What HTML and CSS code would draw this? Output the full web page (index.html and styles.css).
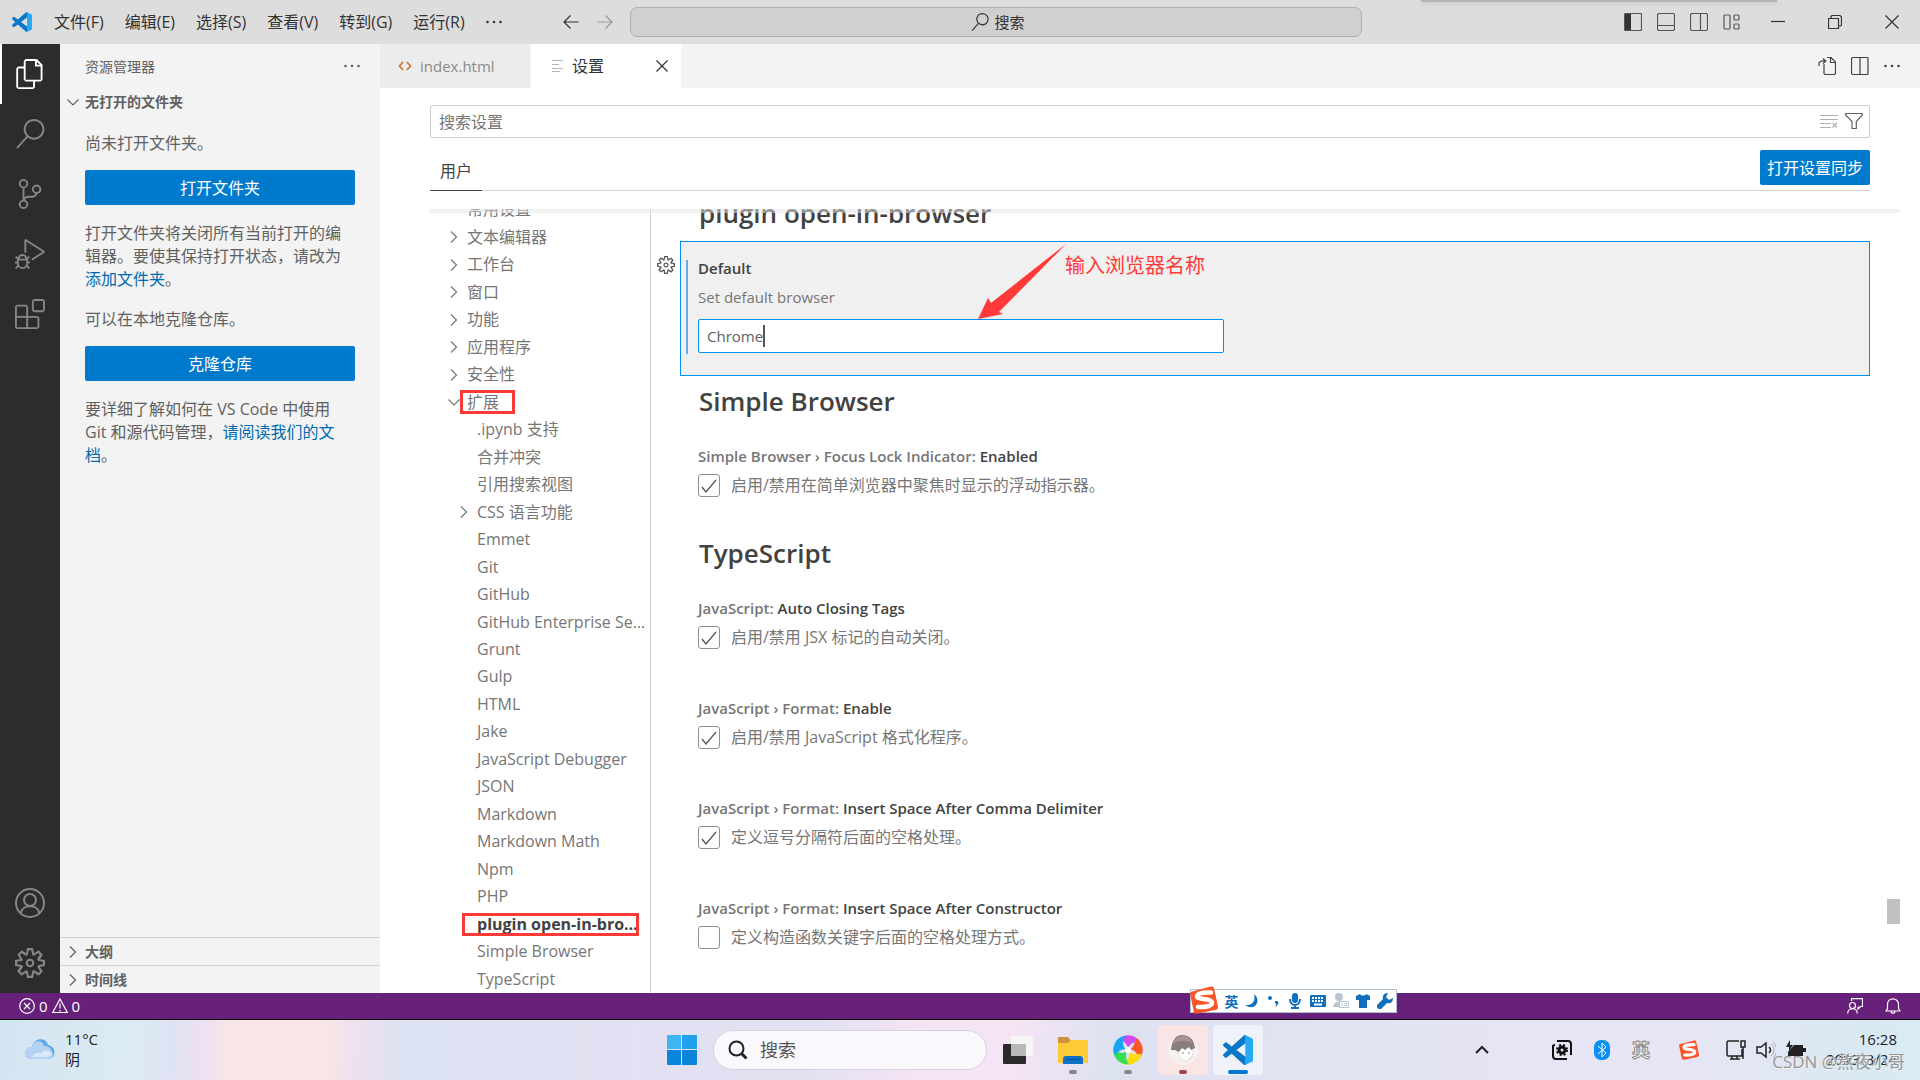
FILE: index.html
```html
<!DOCTYPE html>
<html lang="zh-CN">
<head>
    <meta charset="UTF-8">
    <meta name="viewport" content="width=device-width, initial-scale=1.0">
    <title>设置 - Visual Studio Code</title>
    <link rel="stylesheet" href="styles.css">
</head>
<body>
    <svg class="sprite" aria-hidden="true">
        <symbol id="vscode" viewBox="0 0 24 24">
            <path fill="#0a77c9" d="M18.2.2a1.5 1.5 0 0 0-1.7.3L7 9.1 2.9 6a1 1 0 0 0-1.3.1L.3 7.3a1 1 0 0 0 0 1.4L3.9 12l-3.6 3.3a1 1 0 0 0 0 1.4l1.3 1.2a1 1 0 0 0 1.3.1L7 14.9l9.5 8.6a1.5 1.5 0 0 0 1.7.3zM18 17.4L10.8 12 18 6.6z"/>
            <path fill="#27a9f3" d="M18.2.2l5 2.4a1.5 1.5 0 0 1 .8 1.3v16.2a1.5 1.5 0 0 1-.8 1.3l-5 2.4c-.6.2-1.2.1-1.7-.3.6.5 1.5.1 1.5-.6V1.1c0-.7-.9-1.1-1.5-.6.5-.4 1.1-.5 1.7-.3z"/>
        </symbol>
        <symbol id="gear" viewBox="1 1 14 14">
            <path fill="currentColor" d="M9.1 4.4L8.6 2H7.4l-.5 2.4-.7.3-2-1.3-.9.8 1.3 2-.2.7-2.4.5v1.2l2.4.5.3.8-1.3 2 .8.8 2-1.3.8.3.4 2.3h1.2l.5-2.4.8-.3 2 1.3.8-.8-1.3-2 .3-.8 2.3-.4V7.4l-2.4-.5-.3-.8 1.3-2-.8-.8-2 1.3-.7-.2zM9.4 1l.5 2.4L12 2.1l2 2-1.4 2.1 2.4.4v2.8l-2.4.5L14 12l-2 2-2.1-1.4-.5 2.4H6.6l-.5-2.4L4 13.9l-2-2 1.4-2.1L1 9.4V6.6l2.4-.5L2.1 4l2-2 2.1 1.4.4-2.4h2.8zm.6 7c0 1.1-.9 2-2 2s-2-.9-2-2 .9-2 2-2 2 .9 2 2zM8 9c.6 0 1-.4 1-1s-.4-1-1-1-1 .4-1 1 .4 1 1 1z"/>
        </symbol>
        <symbol id="right" viewBox="0 0 12 12"><path class="line" d="M3 .5L8.5 6 3 11.5"/></symbol>
        <symbol id="down" viewBox="0 0 12 12"><path class="line" d="M.5 3.5L6 9l5.500-5.500"/></symbol>
        <symbol id="dots" viewBox="0 0 16 16"><g fill="currentColor"><circle cx="1.5" cy="8" r="1.3"/><circle cx="8" cy="8" r="1.3"/><circle cx="14.5" cy="8" r="1.3"/></g></symbol>
        <symbol id="magnifier" viewBox="0 0 24 24"><path fill="currentColor" d="M15.25 0a8.25 8.25 0 0 0-6.18 13.72L1 22.88l1.12 1 8.05-9.12A8.251 8.251 0 1 0 15.25.01V0zm0 15a6.75 6.75 0 1 1 0-13.5 6.75 6.75 0 0 1 0 13.5z"/></symbol>
        <symbol id="sogou" viewBox="0 0 28 28">
            <path fill="#fb5426" d="M2 5.5L21 .6q2.5-.6 3.1 1.8L28 20.5q.4 2.6-2 3.2L7 27.7q-2.6.5-3.2-2L.2 8.5Q-.2 6 2 5.5z"/>
            <path fill="none" stroke="#fff" stroke-width="4.5" stroke-linecap="round" d="M21 6.5C13 6 7 7.5 7 10.5c0 3.5 14.5 1.5 15 6 .3 3.5-6 5-14 4.5"/>
        </symbol>
    </svg>

    <header class="titlebar">
        <div class="title-left">
            <svg class="logo"><use href="#vscode"/></svg>
            <nav class="menu">
                <button>文件(F)</button>
                <button>编辑(E)</button>
                <button>选择(S)</button>
                <button>查看(V)</button>
                <button>转到(G)</button>
                <button>运行(R)</button>
                <button aria-label="更多"><svg class="i16"><use href="#dots"/></svg></button>
            </nav>
            <div class="history">
                <button aria-label="后退"><svg class="i16" viewBox="0 0 16 16"><path class="line" d="M15.5 8H1M7.5 1.5L1 8l6.5 6.5"/></svg></button>
                <button class="disabled" aria-label="前进"><svg class="i16" viewBox="0 0 16 16"><path class="line" d="M.5 8H15M8.5 1.5L15 8l-6.5 6.5"/></svg></button>
            </div>
        </div>
        <button class="command-center"><svg class="i18"><use href="#magnifier"/></svg>搜索</button>
        <div class="title-right">
            <div class="layout-controls">
                <button aria-label="切换主侧栏"><svg class="i18" viewBox="0 0 18 18"><rect class="line" x=".5" y=".5" width="17" height="17" rx="1"/><path fill="#333" d="M1 1h6v16H1z"/></svg></button>
                <button aria-label="切换面板"><svg class="i18" viewBox="0 0 18 18"><path class="line" d="M1.5.5h15l1 1v15l-1 1h-15l-1-1v-15zM.5 12.5h17"/></svg></button>
                <button aria-label="切换辅助侧栏"><svg class="i18" viewBox="0 0 18 18"><path class="line" d="M1.5.5h15l1 1v15l-1 1h-15l-1-1v-15zM10.5.5v17"/></svg></button>
                <button aria-label="自定义布局"><svg class="i18" viewBox="0 0 18 18"><g class="line"><rect x="1" y="2" width="6" height="14" rx="1"/><rect x="11" y="2" width="5" height="5" rx="1"/><rect x="11" y="11" width="5" height="5" rx="1"/></g></svg></button>
            </div>
            <div class="window-controls">
                <button aria-label="最小化"><svg class="i14" viewBox="0 0 14 14"><path class="line" d="M0 6.5h14"/></svg></button>
                <button aria-label="还原"><svg class="i14" viewBox="0 0 14 14"><path class="line" d="M.5 3.5h10v10H.5zM3 3.5v-2l1-1h8l1.5 1.5v8l-1 1h-2"/></svg></button>
                <button aria-label="关闭"><svg class="i14" viewBox="0 0 14 14"><path class="line" d="M.5.5l13 13M13.5.5l-13 13"/></svg></button>
            </div>
        </div>
        <div class="top-sliver"></div>
    </header>

    <div class="workbench">
        <nav class="activitybar">
            <button class="active" aria-label="资源管理器"><svg class="i30" viewBox="0 0 24 24"><path fill="currentColor" d="M17.5 0h-9L7 1.5V6H2.5L1 7.5v15.07L2.5 24h12.07L16 22.57V18h4.7l1.3-1.43V4.5L17.5 0zm0 2.12l2.38 2.38H17.5V2.12zm-3 20.38h-12v-15H7v9.07L8.5 18h6v4.5zm6-6h-12v-15H16V6h4.5v10.5z"/></svg></button>
            <button aria-label="搜索"><svg class="i30"><use href="#magnifier"/></svg></button>
            <button aria-label="源代码管理"><svg class="i30" viewBox="0 0 24 24"><path fill="currentColor" d="M21.007 8.222A3.738 3.738 0 0 0 15.045 5.2a3.737 3.737 0 0 0 1.156 6.583 2.988 2.988 0 0 1-2.668 1.67h-2.99a4.456 4.456 0 0 0-2.989 1.165V7.4a3.737 3.737 0 1 0-1.494 0v9.117a3.776 3.776 0 1 0 1.816.099 2.99 2.99 0 0 1 2.668-1.667h2.99a4.484 4.484 0 0 0 4.223-3.039 3.736 3.736 0 0 0 3.25-3.687zM4.565 3.738a2.242 2.242 0 1 1 4.484 0 2.242 2.242 0 0 1-4.484 0zm4.484 16.441a2.242 2.242 0 1 1-4.484 0 2.242 2.242 0 0 1 4.484 0zm8.221-9.715a2.242 2.242 0 1 1 0-4.485 2.242 2.242 0 0 1 0 4.485z"/></svg></button>
            <button aria-label="运行和调试"><svg class="i30" viewBox="0 0 24 24"><path fill="currentColor" d="M10.94 13.5l-1.32 1.32a3.73 3.73 0 0 0-7.24 0L1.06 13.5 0 14.56l1.72 1.72-.22.22V18H0v1.5h1.5v.08c.077.489.214.966.41 1.42L0 22.94 1.06 24l1.65-1.65A4.308 4.308 0 0 0 6 24a4.31 4.31 0 0 0 3.29-1.65L10.94 24 12 22.94 10.09 21c.198-.464.336-.951.41-1.45v-.1H12V18h-1.5v-1.5l-.22-.22L12 14.56l-1.06-1.06zM6 13.5a2.25 2.25 0 0 1 2.25 2.25h-4.5A2.25 2.25 0 0 1 6 13.5zm3 6a3.33 3.33 0 0 1-3 3 3.33 3.33 0 0 1-3-3v-2.25h6v2.25zm14.76-9.9v1.26L13.5 17.37V15.6l8.5-5.37L9 2v9.46a5.07 5.07 0 0 0-1.5-.72V.63L8.64 0l15.12 9.6z"/></svg></button>
            <button aria-label="扩展"><svg class="i30" viewBox="0 0 24 24"><path fill="currentColor" d="M13.5 1.5L15 0h7.5L24 1.5V9l-1.5 1.5H15L13.5 9V1.5zm1.5 0V9h7.5V1.5H15zM0 15V6l1.5-1.5H9L10.5 6v7.5H18l1.5 1.5v7.5L18 24H1.5L0 22.5V15zm9-1.5V6H1.5v7.5H9zM9 15H1.5v7.5H9V15zm1.5 7.5H18V15h-7.5v7.5z"/></svg></button>
            <span class="spacer"></span>
            <button aria-label="帐户"><svg class="i30" viewBox="0 0 30 30"><g fill="none" stroke="currentColor" stroke-width="2"><circle cx="15" cy="15" r="14"/><circle cx="15" cy="12" r="6"/><path d="M6 25c1-9 17-9 18 0"/></g></svg></button>
            <button aria-label="管理"><svg class="i30"><use href="#gear"/></svg></button>
        </nav>

        <aside class="sidebar">
            <div class="sidebar-title">资源管理器<button aria-label="更多操作"><svg class="i16"><use href="#dots"/></svg></button></div>
            <div class="pane-header"><svg class="i12"><use href="#down"/></svg>无打开的文件夹</div>
            <div class="welcome">
                <p>尚未打开文件夹。</p>
                <button class="primary">打开文件夹</button>
                <p>打开文件夹将关闭所有当前打开的编辑器。要使其保持打开状态，请改为<a href="#">添加文件夹</a>。</p>
                <p>可以在本地克隆仓库。</p>
                <button class="primary">克隆仓库</button>
                <p>要详细了解如何在 VS Code 中使用 Git 和源代码管理，<a href="#">请阅读我们的文档</a>。</p>
            </div>
            <div class="pane-header collapsed"><svg class="i12"><use href="#right"/></svg>大纲</div>
            <div class="pane-header collapsed"><svg class="i12"><use href="#right"/></svg>时间线</div>
        </aside>

        <main class="editor">
            <div class="tabs">
                <div class="tab"><svg class="i14 html-icon" viewBox="0 0 14 14"><path fill="none" stroke="currentColor" stroke-width="1.6" d="M5 3L1.5 7 5 11M9 3l3.500 4L9 11"/></svg><span class="file">index.html</span></div>
                <div class="tab current"><svg class="i12 list-icon" viewBox="0 0 12 12"><path fill="none" stroke="currentColor" d="M0 .5h11M0 4.5h7M0 8.5h11M0 11.5h8"/></svg>设置<button aria-label="关闭"><svg class="i12" viewBox="0 0 12 12"><path class="line" d="M.5.5l11 11M11.5.5l-11 11"/></svg></button></div>
                <div class="editor-actions">
                    <button aria-label="打开设置(json)"><svg class="i18" viewBox="0 0 18 18"><path class="line" d="M6 7v9.500l1 1h9.500l1-1V5L13 .5H9M12.500.5v5h5M1.500 9C-.5 5 3 3.500 7.500 4M5 1.500L7.800 4 5 6.500"/></svg></button>
                    <button aria-label="拆分编辑器"><svg class="i18" viewBox="0 0 18 18"><path class="line" d="M1.500.5h15l.5 1v15l-.5 1h-15l-1-1v-15zM9 .5v17"/></svg></button>
                    <button aria-label="更多操作"><svg class="i16"><use href="#dots"/></svg></button>
                </div>
            </div>

            <div class="settings-head">
                <div class="settings-search">
                    <input type="text" placeholder="搜索设置" aria-label="搜索设置">
                    <button class="faded" aria-label="清除"><svg class="i18" viewBox="0 0 18 18"><path class="line" d="M0 2.5h18M0 6.5h18M0 10.5h11M0 14.5h11M12.500 10l4.500 4.500M17 10l-4.500 4.500"/></svg></button>
                    <button aria-label="筛选"><svg class="i18" viewBox="0 0 18 18"><path class="line" d="M.7.5h16.600V2l-6 6.500v7H7v-7L.7 2z"/></svg></button>
                </div>
                <div class="settings-tabs">
                    <button class="scope">用户</button>
                    <button class="primary">打开设置同步</button>
                </div>
            </div>

            <div class="settings-body">
                <ul class="toc">
                    <li>常用设置</li>
                    <li><svg class="i12"><use href="#right"/></svg>文本编辑器</li>
                    <li><svg class="i12"><use href="#right"/></svg>工作台</li>
                    <li><svg class="i12"><use href="#right"/></svg>窗口</li>
                    <li><svg class="i12"><use href="#right"/></svg>功能</li>
                    <li><svg class="i12"><use href="#right"/></svg>应用程序</li>
                    <li><svg class="i12"><use href="#right"/></svg>安全性</li>
                    <li><svg class="i12"><use href="#down"/></svg>扩展<span class="mark mark-short"></span></li>
                    <li class="child">.ipynb 支持</li>
                    <li class="child">合并冲突</li>
                    <li class="child">引用搜索视图</li>
                    <li class="child"><svg class="i12"><use href="#right"/></svg>CSS 语言功能</li>
                    <li class="child">Emmet</li>
                    <li class="child">Git</li>
                    <li class="child">GitHub</li>
                    <li class="child"><span class="clip">GitHub Enterprise Server</span></li>
                    <li class="child">Grunt</li>
                    <li class="child">Gulp</li>
                    <li class="child">HTML</li>
                    <li class="child">Jake</li>
                    <li class="child">JavaScript Debugger</li>
                    <li class="child">JSON</li>
                    <li class="child">Markdown</li>
                    <li class="child">Markdown Math</li>
                    <li class="child">Npm</li>
                    <li class="child">PHP</li>
                    <li class="child selected"><span class="clip">plugin open-in-browser</span><span class="mark mark-long"></span></li>
                    <li class="child">Simple Browser</li>
                    <li class="child">TypeScript</li>
                </ul>

                <section class="settings-list">
                    <h2>plugin open-in-browser</h2>
                    <div class="setting focused">
                        <button class="setting-gear" aria-label="更多操作"><svg class="i18"><use href="#gear"/></svg></button>
                        <div class="modified"></div>
                        <label class="name" for="browser"><b>Default</b></label>
                        <p>Set default browser</p>
                        <div class="field"><input type="text" id="browser" value="Chrome"><span class="caret"></span></div>
                        <svg class="arrow" viewBox="0 0 90 76"><path fill="#ff3a38" d="M88 1L21 69l4 2-25 5 10-21 3 5z"/></svg>
                        <span class="note">输入浏览器名称</span>
                    </div>

                    <h2>Simple Browser</h2>
                    <div class="setting">
                        <div class="name">Simple Browser › Focus Lock Indicator: <b>Enabled</b></div>
                        <label class="check"><input type="checkbox" checked>启用/禁用在简单浏览器中聚焦时显示的浮动指示器。</label>
                    </div>

                    <h2>TypeScript</h2>
                    <div class="setting">
                        <div class="name">JavaScript: <b>Auto Closing Tags</b></div>
                        <label class="check"><input type="checkbox" checked>启用/禁用 JSX 标记的自动关闭。</label>
                    </div>
                    <div class="setting">
                        <div class="name">JavaScript › Format: <b>Enable</b></div>
                        <label class="check"><input type="checkbox" checked>启用/禁用 JavaScript 格式化程序。</label>
                    </div>
                    <div class="setting">
                        <div class="name">JavaScript › Format: <b>Insert Space After Comma Delimiter</b></div>
                        <label class="check"><input type="checkbox" checked>定义逗号分隔符后面的空格处理。</label>
                    </div>
                    <div class="setting">
                        <div class="name">JavaScript › Format: <b>Insert Space After Constructor</b></div>
                        <label class="check"><input type="checkbox">定义构造函数关键字后面的空格处理方式。</label>
                    </div>
                </section>
                <div class="scroll-thumb"></div>
            </div>
        </main>
    </div>

    <div class="statusbar">
        <button class="problems">
            <svg class="i16" viewBox="0 0 16 16"><g class="line"><circle cx="8" cy="8" r="7.3"/><path d="M5 5l6 6M11 5l-6 6"/></g></svg>0
            <svg class="i16" viewBox="0 0 16 16"><path class="line" d="M8 1L.7 14.5h14.600zM8 5.5v5M8 12v1.500"/></svg>0
        </button>
        <div class="status-right">
            <button aria-label="反馈"><svg class="i16" viewBox="0 0 16 16"><g class="line"><circle cx="5.5" cy="7.5" r="3"/><path d="M.7 15.5c0-6.500 9.600-6.500 9.600 0M4.500 3V.7h11v7.800h-2L11 11V8.500"/></g></svg></button>
            <button aria-label="通知"><svg class="i16" viewBox="0 0 16 16"><path class="line" d="M1 13h14l-1.500-2.500v-4c0-7.500-11-7.500-11 0v4zM6 13.500c.5 2.300 3.500 2.300 4 0"/></svg></button>
        </div>
        <div class="ime">
            <svg class="ime-logo"><use href="#sogou"/></svg>
            <span>英</span>
            <svg class="i14" viewBox="0 0 14 14"><path fill="currentColor" d="M9 0c8 6 1 18-9 11 7 1 11-4 9-11z"/></svg>
            <svg class="i14" viewBox="0 0 14 14"><circle cx="4" cy="4" r="2" fill="currentColor"/><path fill="currentColor" d="M9 7c6-1 3 5 0 6 1-2 2-3 0-4z"/></svg>
            <svg class="i16" viewBox="0 0 16 16"><rect x="5" y="0" width="6" height="10" rx="3" fill="currentColor"/><path fill="none" stroke="currentColor" stroke-width="2" d="M3 6c0 8 10 8 10 0M8 12v3M4 15h8"/></svg>
            <svg class="i16" viewBox="0 0 16 16"><rect x="0" y="2" width="16" height="12" rx="1" fill="currentColor"/><path stroke="#fff" stroke-width="2" stroke-dasharray="2 1" d="M2 5h12M2 8h12"/><path stroke="#fff" stroke-width="2" d="M4 11.5h8"/></svg>
            <svg class="i16 muted" viewBox="0 0 16 16"><circle cx="6" cy="4" r="4" fill="currentColor"/><path fill="currentColor" d="M0 14c0-7 12-7 12 0z"/><rect x="6.500" y="8.500" width="9" height="6" fill="#fff" stroke="currentColor"/><path stroke="currentColor" d="M9 10v3M11 10.500h2.500M11 12.500h2.500M13.500 10v3"/></svg>
            <svg class="i14" viewBox="0 0 14 14"><path fill="currentColor" d="M0 2l4-2c1 2 5 2 6 0l4 2v4h-3v8H3V6H0z"/></svg>
            <svg class="i16" viewBox="0 0 16 16"><path fill="currentColor" d="M11 0L9 4l3 3 4-2c0 5-4 6-6 5l-6 6c-3 1-5-2-4-4l6-6c-1-3 1-6 5-6z"/></svg>
        </div>
    </div>

    <footer class="taskbar">
        <div class="weather">
            <svg class="cloud" viewBox="0 0 30 20"><path fill="#62a8e8" d="M7 8C9-2 21-2 23 6c8 1 9 13 1 14H6C-2 19-1 9 7 8z"/><path fill="#b5d2f3" d="M6 20C-2 19-1 8 7 8c2-8 11-7 12-1 6-1 8 5 9 8 0 3-2 5-5 5z"/><path fill="#d9e8fa" d="M8 18c0-4 5-5 8-4 3-4 9-3 11 1-2 4-10 3-19 3z"/></svg>
            <div>11°C<br>阴</div>
        </div>
        <div class="apps">
            <button class="app start" aria-label="开始"><svg class="i30" viewBox="0 0 30 30"><g fill="#0b84dc"><path fill="#3fb4f3" d="M0 1q0-1 1-1h13v14H0z"/><path fill="#1ea2ee" d="M15 0h14q1 0 1 1v13H15z"/><path d="M0 15h14v15H1q-1 0-1-1zM15 15h15v14q0 1-1 1H15z"/></g></svg></button>
            <label class="task-search"><svg viewBox="0 0 20 20"><circle cx="8.500" cy="8.500" r="7" fill="none" stroke="#222" stroke-width="2"/><path stroke="#222" stroke-width="3" d="M13.500 13.500l5 5"/></svg><input type="text" placeholder="搜索" aria-label="搜索"></label>
            <button class="app" aria-label="任务视图"><svg class="i30" viewBox="0 0 30 30"><rect y="9" width="23" height="20" rx="1" fill="#2a2a2a"/><rect x="8" y="1" width="22" height="20" rx="1" fill="#f6f6f6"/><path fill="#b8b8b8" d="M8 9h15v12H8z"/></svg></button>
            <button class="app running" aria-label="文件资源管理器"><svg class="i30" viewBox="0 0 30 30"><path fill="#cf923a" d="M0 2h10l3 4h10v8H0z"/><path fill="#ffca38" d="M13 5h16q1 0 1 1v22H0V8h10z"/><path fill="#0f72c8" d="M5 29v-5q0-3 3-3h14q3 0 3 3v5z"/><path stroke="#0a4f94" d="M9 24.500h12"/></svg></button>
            <button class="app running" aria-label="浏览器"><svg class="i30" viewBox="-15 -15 30 30">
                <path id="petal" fill="#d04bf0" d="M-9-11C-3-17 9-16 13-6 8-9 2-7 0-2-1-6-4-9-9-11z"/>
                <path fill="#fb5a27" transform="rotate(72)" d="M-9-11C-3-17 9-16 13-6 8-9 2-7 0-2-1-6-4-9-9-11z"/>
                <path fill="#fbdc12" transform="rotate(144)" d="M-9-11C-3-17 9-16 13-6 8-9 2-7 0-2-1-6-4-9-9-11z"/>
                <path fill="#36df52" transform="rotate(216)" d="M-9-11C-3-17 9-16 13-6 8-9 2-7 0-2-1-6-4-9-9-11z"/>
                <path fill="#18a5f5" transform="rotate(288)" d="M-9-11C-3-17 9-16 13-6 8-9 2-7 0-2-1-6-4-9-9-11z"/>
                <circle r="3" fill="#fff"/>
            </svg></button>
            <button class="app running alert" aria-label="聊天"><svg class="i30" viewBox="0 0 30 30"><circle cx="15" cy="15" r="15" fill="#f3f2f1"/><path fill="#e3d8d4" d="M8 14l4 10 6 3 7-5-1-8z"/><path fill="#fff" d="M10 14l2 9 6 3 6-5v-8z"/><path fill="#8a7d7e" d="M3 15C4 5 8 0 14 0c8 0 12 5 13 13l-4 2-2-3-4 3-3-2-3 4-4-2z"/><path fill="#ad9290" d="M5 9C7-1 22-2 24 8c-6-3-12-3-19 1z"/><path stroke="#8a7d7e" d="M14 18h2M20 18h2"/></svg></button>
            <button class="app running open" aria-label="Visual Studio Code"><svg class="i30"><use href="#vscode"/></svg></button>
        </div>
        <div class="tray">
            <svg class="i14 up" viewBox="0 0 14 14"><path fill="none" stroke="#222" stroke-width="2" d="M1 10l6-6 6 6"/></svg>
            <svg class="i20" viewBox="0 0 20 20"><path fill="none" stroke="#111" stroke-width="2" d="M5 1h11q3 0 3 3v11M1 5v11q0 3 3 3h11M15 19H4q-3 0-3-3V7q0-2 2-2"/><circle cx="10" cy="10" r="3" fill="none" stroke="#111" stroke-width="3"/><circle cx="10" cy="10" r="5" fill="none" stroke="#111" stroke-width="2" stroke-dasharray="2 2"/></svg>
            <svg class="i20" viewBox="0 0 20 20"><rect x="2" width="16" height="20" rx="7" fill="#0a90f0"/><path fill="none" stroke="#fff" d="M6 6l8 7-4 4V3l4 4-8 7"/></svg>
            <span class="lang">英</span>
            <svg class="i20 tray-ime"><use href="#sogou"/></svg>
            <div class="tray-group">
                <svg class="i20" viewBox="0 0 20 20"><path fill="none" stroke="#222" stroke-width="1.5" d="M13 1H2L1 2v13l1 1h14V9M6 16v3M11 16v3M4 19h10M15 1h4v6h-4zM17 7v12"/></svg>
                <svg class="i20" viewBox="0 0 20 20"><path fill="none" stroke="#222" stroke-width="1.5" d="M1 7h4l5-4v14l-5-4H1zM13 7c2 2 2 4 0 6"/><path fill="none" stroke="#aaa" d="M15 4c4 4 4 8 0 12M17 2c5 5 5 11 0 16"/></svg>
                <svg class="i20" viewBox="0 0 20 20"><path fill="#222" d="M8 5h9v3h3v4h-3v4H2v-4zM4 0L0 7h3v4l4-6H4z"/></svg>
            </div>
            <div class="clock">16:28<br>2023/3/24</div>
        </div>
        <div class="watermark">CSDN @熬夜小哥</div>
    </footer>
</body>
</html>
```
FILE: styles.css
```css
* { box-sizing: border-box; }
body { font-family: 'Open Sans', 'Noto Sans CJK SC', sans-serif; font-size: 16px; line-height: 23px; color: #616161; margin: 0; height: 100vh; display: flex; flex-direction: column; overflow: hidden; background: white; }
button, input { font: inherit; color: inherit; padding: 0; margin: 0; border: 0; background: none; outline: none; }
button { cursor: pointer; }
a { color: #006ab1; text-decoration: none; }
svg { display: block; flex: none; }
.sprite { position: absolute; width: 0; height: 0; }
.line { fill: none; stroke: currentColor; stroke-width: 1.2; }
.i12 { width: 12px; height: 12px; }
.i14 { width: 14px; height: 14px; }
.i16 { width: 16px; height: 16px; }
.i18 { width: 18px; height: 18px; }
.i20 { width: 20px; height: 20px; }
.i30 { width: 30px; height: 30px; }
.primary { background: #007acc; color: white; height: 35px; padding-top: 2px; border-radius: 2px; }

/* title bar */
.titlebar { position: relative; display: flex; align-items: center; height: 44px; flex: none; background: #ddd; color: #333; }
.title-left { display: flex; align-items: center; width: 630px; padding: 0 17px 0 12px; }
.logo { width: 20px; height: 20px; margin-right: 12px; }
.menu { display: flex; align-items: center; gap: 1px; }
.menu button { padding: 0 10px; }
.history { display: flex; gap: 18px; margin-left: auto; }
.disabled { color: #999; }
.command-center { display: flex; justify-content: center; align-items: center; gap: 5px; flex: 1; height: 30px; padding-left: 4px; font-size: 15px; background: #d0d0d0; border: 1px solid #b0b0b0; border-radius: 7px; }
.title-right { display: flex; align-items: center; justify-content: flex-end; width: 558px; }
.layout-controls { display: flex; gap: 15px; margin-right: 8px; color: #555; }
.window-controls { display: flex; }
.window-controls button { display: flex; justify-content: center; width: 57px; }
.top-sliver { position: absolute; top: 0; right: 143px; width: 356px; height: 2px; background: #b5b5b5; box-shadow: 0 1px 4px #bbb; }

/* activity bar */
.workbench { display: flex; flex: 1; min-height: 0; }
.activitybar { display: flex; flex-direction: column; width: 60px; background: #2c2c2c; }
.activitybar button { display: flex; justify-content: center; align-items: center; height: 60px; color: #868686; border-right: 2px solid transparent; border-left: 2px solid transparent; }
.activitybar .active { color: white; border-left-color: white; }
.spacer { flex: 1; }

/* sidebar */
.sidebar { display: flex; flex-direction: column; width: 320px; background: #f3f3f3; }
.sidebar-title { display: flex; justify-content: space-between; align-items: center; height: 44px; padding: 0 20px 0 25px; font-size: 14px; }
.pane-header { display: flex; align-items: center; gap: 6px; height: 27px; padding-left: 7px; font-size: 14px; font-weight: bold; }
.collapsed { height: 28px; border-top: 1px solid #d4d4d4; }
.welcome { flex: 1; padding: 0 25px; }
.welcome p { margin: 17px 0 15px; }
.welcome .primary { display: block; width: 100%; }

/* editor */
.editor { display: flex; flex-direction: column; flex: 1; min-width: 0; }
.tabs { display: flex; height: 44px; background: #f3f3f3; }
.tab { display: flex; align-items: center; gap: 8px; width: 151px; padding: 0 13px 0 18px; background: #ececec; color: #8a8a8a; border-right: 1px solid #f3f3f3; }
.tab.current { padding-left: 21px; background: white; color: #333; }
.tab button { margin-left: auto; }
.file { font-size: 15px; }
.html-icon { color: #cc7433; }
.list-icon { color: #b5b5b5; }
.editor-actions { display: flex; align-items: center; gap: 15px; margin-left: auto; padding-right: 20px; color: #424242; }
.settings-head { padding: 17px 50px 18px; }
.settings-search { display: flex; align-items: center; gap: 7px; height: 33px; padding: 0 6px 0 8px; border: 1px solid #cecece; border-radius: 2px; }
.settings-search input { flex: 1; padding-top: 2px; }
.settings-search input::placeholder { color: #767676; }
.faded { color: #b0b0b0; }
.settings-tabs { display: flex; justify-content: space-between; align-items: center; height: 53px; padding-top: 6px; border-bottom: 1px solid #d4d4d4; }
.settings-tabs .primary { width: 110px; }
.scope { align-self: flex-end; height: 47px; margin-bottom: -1px; padding: 8px 10px 0; color: #424242; border-bottom: 1px solid #424242; }
.settings-body { position: relative; display: flex; flex: 1; min-height: 0; margin: 0 20px 0 50px; overflow: hidden; }
.settings-body::before { content: ''; position: absolute; z-index: 1; top: 0; left: 0; right: 0; height: 4px; background: rgba(228, 228, 228, 0.5); }

/* table of contents */
.toc { display: flex; flex-direction: column; width: 221px; margin: 0; padding: 0; list-style: none; border-right: 1px solid #d0d0d0; color: #767676; }
.toc li { position: relative; display: flex; align-items: center; flex: 1; min-height: 0; padding-left: 37px; }
.toc li:first-child { margin-top: -13px; }
.toc li svg { margin: 0 7px 0 -19px; }
.toc .child { padding-left: 47px; }
.toc .selected { color: #424242; font-weight: bold; }
.clip { flex: 1; margin-right: 2px; overflow: hidden; text-overflow: ellipsis; white-space: nowrap; }
.mark { position: absolute; top: 2px; bottom: 2px; border: 3px solid #f93a37; }
.mark-short { left: 30px; width: 55px; }
.mark-long { left: 32px; width: 177px; }

/* settings */
.settings-list { flex: 1; padding: 0 30px 0 29px; }
h2 { margin: 7px 0 11px; padding-left: 19px; font-size: 26px; font-weight: 600; line-height: 34px; color: #424242; }
h2:first-child { margin-top: -13px; }
.setting { position: relative; height: 100px; padding: 16px 18px 0; color: #767676; }
.name { display: block; font-size: 15px; font-weight: 600; }
.name b { font-weight: 600; color: #424242; }
.focused { height: 135px; margin-bottom: 8px; padding: 15px 17px; background: #f0f0f0; border: 1px solid #0090f1; }
.focused p { margin: 6px 0 10px; font-size: 15px; }
.modified { position: absolute; top: 18px; left: 5px; width: 2px; height: 94px; background: #66afe0; }
.setting-gear { position: absolute; top: 14px; left: -24px; color: #555; }
.field { position: relative; max-width: 526px; height: 34px; border: 1px solid #0090f1; border-radius: 2px; background: white; color: #616161; }
.field input { width: 100%; height: 100%; padding-left: 8px; font-size: 15px; }
.caret { position: absolute; top: 5px; left: 64px; width: 2px; height: 22px; background: #555; }
.arrow { position: absolute; top: 1px; left: 297px; width: 90px; height: 76px; }
.note { position: absolute; top: 12px; left: 384px; font-size: 20px; color: #ff3a38; }
.check { display: flex; align-items: center; gap: 11px; margin-top: 6px; }
.check input { appearance: none; width: 22px; height: 23px; border: 1px solid #919191; border-radius: 3px; }
.check input:checked { background: url("data:image/svg+xml,%3Csvg xmlns='http://www.w3.org/2000/svg' viewBox='0 0 20 20'%3E%3Cpath d='M3 11l4 5L17 4' fill='none' stroke='%23555' stroke-width='1.3'/%3E%3C/svg%3E") center / 20px no-repeat; }
.scroll-thumb { position: absolute; right: 0; bottom: 69px; width: 13px; height: 25px; background: #c1c1c1; }

/* status bar */
.statusbar { position: relative; display: flex; justify-content: space-between; align-items: center; height: 27px; flex: none; padding: 0 19px; background: #68217a; border-bottom: 1px solid black; color: white; font-size: 15px; }
.problems { display: flex; align-items: center; gap: 4px; }
.status-right { display: flex; gap: 22px; }
.ime { position: absolute; top: -4px; left: 62%; display: flex; align-items: center; gap: 7px; width: 207px; height: 24px; padding-left: 33px; background: white; border: 1px solid #b0c2ce; color: #1170bd; font-size: 14px; font-weight: bold; }
.ime-logo { position: absolute; top: -4px; left: -1px; width: 28px; height: 28px; }
.muted { color: #b8c6d6; }

/* taskbar */
.taskbar { position: relative; display: flex; align-items: center; height: 60px; flex: none; color: #222; font-size: 15px; line-height: 20px; background: linear-gradient(93deg, #d3e5f2, #dcebf3 7%, #dfe3f4 9%, #f0e0f1 11%, #fae6e6 12%, #f9e5e6 17%, #efe0f0 18.5%, #dde3f2 21%, #e3e1f3 33%, #e1e1f2 42%, #f5e4f4 48%, #f4e4f4 53%, #dde2f1 58%, #e4e4f4 75%, #e7e5f6 88%, #d9e9f3 97%, #d9ebf4); }
.weather { display: flex; align-items: center; gap: 10px; width: 662px; padding: 0 0 2px 25px; }
.cloud { width: 30px; height: 20px; }
.apps { display: flex; align-items: center; gap: 5px; }
.app { position: relative; display: flex; justify-content: center; align-items: center; width: 50px; height: 50px; border-radius: 4px; }
.apps .start { width: 40px; margin-right: 6px; }
.task-search { display: flex; align-items: center; gap: 12px; width: 274px; height: 40px; margin-right: 1px; padding-left: 14px; border: 1px solid #d5d3df; border-radius: 20px; background: #faf8fd; font-size: 18px; }
.task-search svg { width: 20px; height: 20px; }
.task-search input { width: 200px; }
.task-search input::placeholder { color: #555; }
.running::after { content: ''; position: absolute; bottom: 1px; width: 8px; height: 4px; border-radius: 2px; background: #888; }
.alert { background: #fae4e6; }
.alert::after { background: #a04848; }
.open { background: #f0f2fa; }
.open::after { width: 20px; background: #0078d4; }
.tray { display: flex; align-items: center; gap: 20px; margin-left: auto; padding: 0 23px 0 0; }
.up { margin-right: 43px; }
.lang { font-size: 18px; font-weight: bold; color: #f8f8fb; -webkit-text-stroke: 1px #888; }
.tray-ime { margin-left: 9px; }
.tray-group { display: flex; gap: 10px; margin-left: 7px; }
.clock { padding-bottom: 2px; text-align: right; }
.watermark { position: absolute; right: 15px; bottom: 8px; font-size: 17px; color: #999; text-shadow: 1px 1px 0 #eee; }
```
